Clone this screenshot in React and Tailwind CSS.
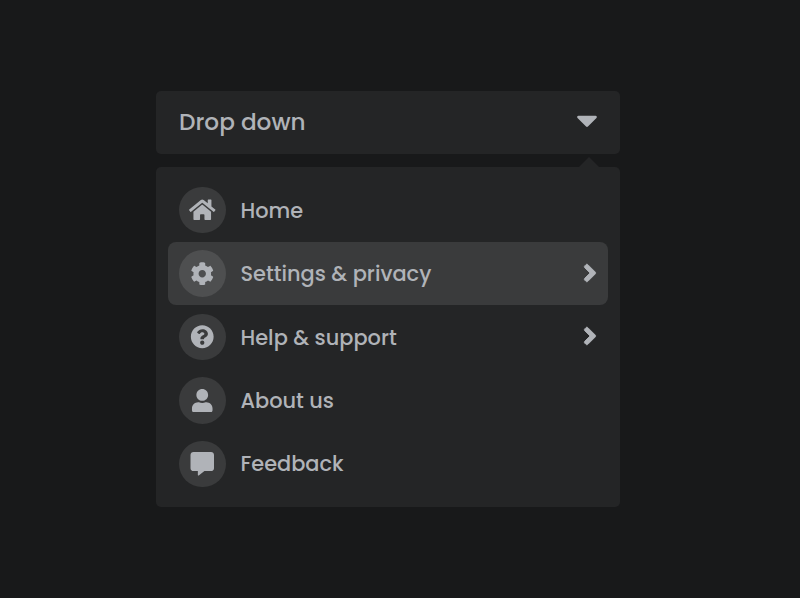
import React, { useState } from 'react';
import { FaHome, FaCog, FaQuestionCircle, FaUser, FaCommentAlt, FaCaretDown, FaAngleRight } from 'react-icons/fa';

const MENU_ITEMS = [
  { label: 'Home', icon: FaHome },
  { label: 'Settings & privacy', icon: FaCog, hasSub: true },
  { label: 'Help & support', icon: FaQuestionCircle, hasSub: true },
  { label: 'About us', icon: FaUser },
  { label: 'Feedback', icon: FaCommentAlt },
];

export default function App() {
  const [isOpen, setIsOpen] = useState(true);
  const [active, setActive] = useState('Settings & privacy');

  return (
    <div className="h-screen overflow-hidden bg-[#18191a] pt-[91px] pl-[156px] font-['Poppins','Inter',sans-serif] font-medium text-[#b0b3b8]">
      <nav className="w-[464px]">
        <button onClick={() => setIsOpen(!isOpen)} className="flex h-[63px] w-full items-center justify-between rounded-[5px] bg-[#242526] pl-[23px] pr-[15px]">
          <span className="text-[23.2px] leading-none">Drop down</span>
          <FaCaretDown className="mb-[6px] h-[34px] w-[36px]" />
        </button>

        {isOpen && (
          <div className="relative mt-[13px] h-[340px] rounded-[5px] bg-[#242526] px-3 pt-[11.5px]">
            {/* pointer towards the caret */}
            <span className="absolute -top-[10px] right-[21px] h-[10px] w-5 bg-[#242526] [clip-path:polygon(50%_0,100%_100%,0_100%)]" />
            <ul>
              {MENU_ITEMS.map(({ label, icon: Icon, hasSub }) => (
                <li key={label} onMouseEnter={() => setActive(label)} className={`flex h-[63.4px] cursor-pointer items-center rounded-[8px] pl-[11px] pr-[3px] ${active === label ? 'bg-[#3a3b3c]' : ''}`}>
                  <span className={`mr-[15px] flex size-[46.5px] shrink-0 items-center justify-center rounded-full ${active === label ? 'bg-[#4e4f50]' : 'bg-[#3a3b3c]'}`}>
                    <Icon className="h-[23.5px] w-[26.5px]" />
                  </span>
                  <span className="whitespace-nowrap pt-[2px] text-[20.9px] leading-none">{label}</span>
                  {hasSub && <FaAngleRight className="mb-px ml-auto h-[28px] w-[30px] stroke-current [stroke-width:16]" />}
                </li>
              ))}
            </ul>
          </div>
        )}
      </nav>
    </div>
  );
}
